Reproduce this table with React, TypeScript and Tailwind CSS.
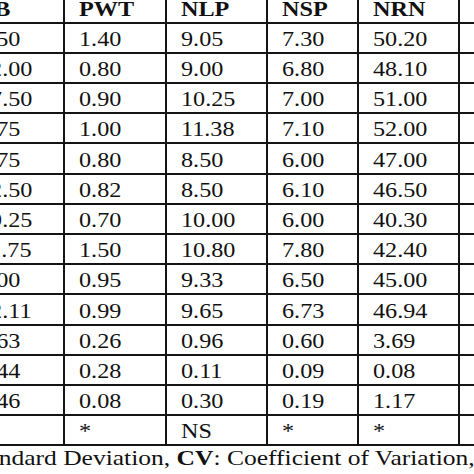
const widths = ["w-[101px]", "w-[102px]", "w-[101px]", "w-[91px]", "w-[101px]", "w-[101px]"];

const header = ["TB", "PWT", "NLP", "NSP", "NRN", ""];

const rows: { h: string; cells: string[] }[] = [
  { h: "h-[30px]", cells: ["8.50", "1.40", "9.05", "7.30", "50.20", ""] },
  { h: "h-[30px]", cells: ["12.00", "0.80", "9.00", "6.80", "48.10", ""] },
  { h: "h-[30px]", cells: ["17.50", "0.90", "10.25", "7.00", "51.00", ""] },
  { h: "h-[30px]", cells: ["8.75", "1.00", "11.38", "7.10", "52.00", ""] },
  { h: "h-[31px]", cells: ["8.75", "0.80", "8.50", "6.00", "47.00", ""] },
  { h: "h-[30px]", cells: ["12.50", "0.82", "8.50", "6.10", "46.50", ""] },
  { h: "h-[30px]", cells: ["19.25", "0.70", "10.00", "6.00", "40.30", ""] },
  { h: "h-[30px]", cells: ["11.75", "1.50", "10.80", "7.80", "42.40", ""] },
  { h: "h-[30px]", cells: ["9.00", "0.95", "9.33", "6.50", "45.00", ""] },
  { h: "h-[31px]", cells: ["12.11", "0.99", "9.65", "6.73", "46.94", ""] },
  { h: "h-[30px]", cells: ["2.63", "0.26", "0.96", "0.60", "3.69", ""] },
  { h: "h-[30px]", cells: ["0.44", "0.28", "0.11", "0.09", "0.08", ""] },
  { h: "h-[30px]", cells: ["4.46", "0.08", "0.30", "0.19", "1.17", ""] },
  { h: "h-[30px]", cells: ["", "*", "NS", "*", "*", ""] },
];

function Cell({ w, text, bold, last }: { w: string; text: string; bold?: boolean; last?: boolean }) {
  return (
    <div
      className={`${w} flex shrink-0 items-center border-l-2 border-t-2 border-[#141414] pl-[14px] pt-[2px] ${
        last ? "border-b-2" : ""
      }`}
    >
      <span className={`inline-block origin-left scale-x-[1.1] whitespace-nowrap ${bold ? "font-bold" : ""}`}>
        {text}
      </span>
    </div>
  );
}

export default function App() {
  return (
    <div className="h-[474px] w-[474px] overflow-hidden bg-white font-['Liberation_Serif','Times_New_Roman',serif] text-[22px] leading-none text-[#111]">
      <div className="ml-[-38px] mt-[-8px] flex w-[700px] flex-col">
        <div className="flex h-[30px]">
          {header.map((t, i) => (
            <Cell key={i} w={widths[i]} text={t} bold />
          ))}
        </div>
        {rows.map((r, ri) => (
          <div key={ri} className={`flex ${ri === rows.length - 1 ? "h-[32px]" : r.h}`}>
            {r.cells.map((t, i) => (
              <Cell key={i} w={widths[i]} text={t} last={ri === rows.length - 1} />
            ))}
          </div>
        ))}
      </div>
      <div className="ml-[-80px] whitespace-nowrap leading-[24px]">
        <span className="inline-block origin-left scale-x-[1.16]">
          <b>SD</b>: Standard Deviation, <b>CV</b>: Coefficient of Variation, <b>NS</b>: Non Significant
        </span>
      </div>
    </div>
  );
}
